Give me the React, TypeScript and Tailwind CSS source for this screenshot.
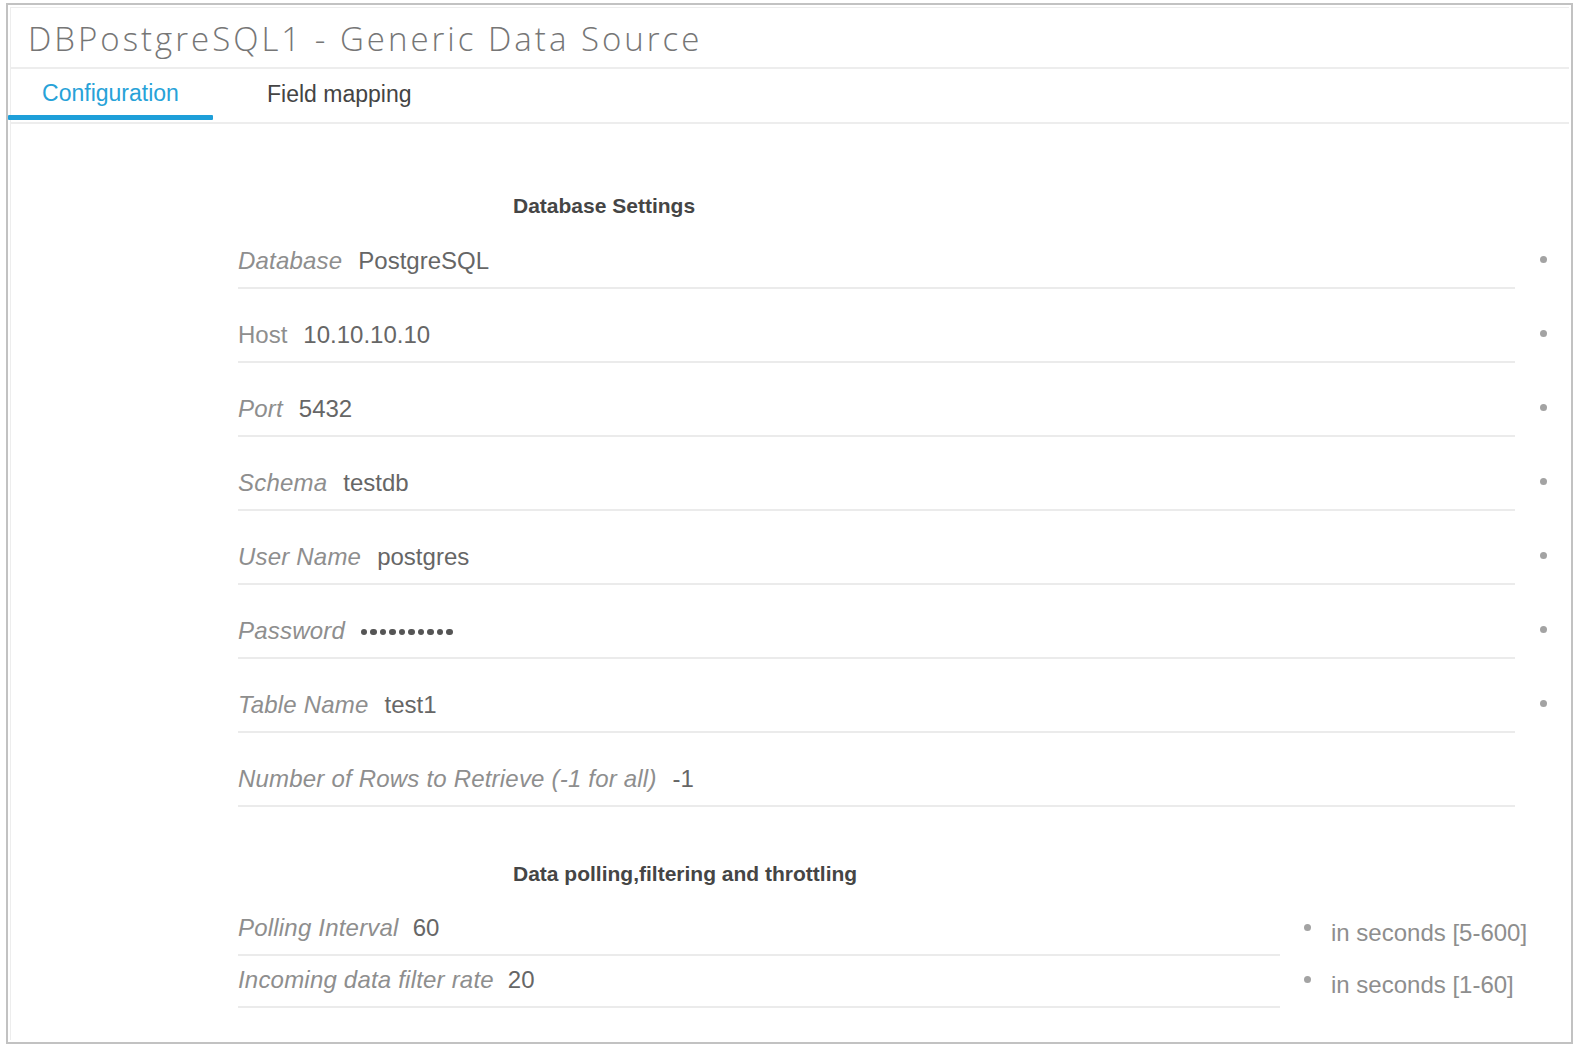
import React from 'react';

type Field = {
    label: string;
    value: string;
    required?: boolean;
    italic?: boolean;
    secret?: boolean;
};

const dbFields: Field[] = [
    { label: 'Database', value: 'PostgreSQL', required: true, italic: true },
    { label: 'Host', value: '10.10.10.10', required: true },
    { label: 'Port', value: '5432', required: true, italic: true },
    { label: 'Schema', value: 'testdb', required: true, italic: true },
    { label: 'User Name', value: 'postgres', required: true, italic: true },
    { label: 'Password', value: '', required: true, italic: true, secret: true },
    { label: 'Table Name', value: 'test1', required: true, italic: true },
    { label: 'Number of Rows to Retrieve (-1 for all)', value: '-1', italic: true },
];

const pollFields = [
    { label: 'Polling Interval', value: '60', hint: 'in seconds [5-600]' },
    { label: 'Incoming data filter rate', value: '20', hint: 'in seconds [1-60]' },
];

const Dot = () => <span className="block w-[7px] h-[7px] rounded-full bg-[#a3a3a3]" />;

function FieldRow({ field }: { field: Field }) {
    return (
        <div className="flex">
            <div className="w-[1277px] shrink-0 flex items-center gap-[16px] pt-[32px] pb-[12px] border-b-2 border-[#ebebeb] leading-[28px] text-[24px]">
                <span className={field.italic ? 'italic text-[#8e8e8e] tracking-[0.2px]' : 'text-[#8e8e8e]'}>
                    {field.label}
                </span>
                {field.secret ? (
                    <span className="flex gap-[3px] items-center pt-[2px]">
                        {Array.from({ length: 10 }).map((_, i) => (
                            <span key={i} className="block w-[6.5px] h-[6.5px] rounded-full bg-[#555]" />
                        ))}
                    </span>
                ) : (
                    <span className="text-[#666]">{field.value}</span>
                )}
            </div>
            <div className="w-[50px] shrink-0 flex items-start pl-[25px] pt-[41px]">
                {field.required && <Dot />}
            </div>
        </div>
    );
}

export default function App() {
    return (
        <div
            className="w-[1591px] h-[1060px] bg-white pt-[3px] pl-[6px]"
            style={{ fontFamily: '"Liberation Sans", Arial, sans-serif' }}
        >
            <div className="w-[1567px] h-[1041px] border-2 border-[#c2c2c2]">
                <div className="m-[2px] h-[1033px] border-l border-t border-[#ededed]">
                    <div className="h-[61px] flex items-center pl-[17px] pt-[2px] border-b-2 border-[#ededed]">
                        <h1
                            className="text-[#767676] text-[33px] font-light tracking-[3px]"
                            style={{ fontFamily: '"Open Sans", sans-serif' }}
                        >
                            DBPostgreSQL1 - Generic Data Source
                        </h1>
                    </div>

                    <div className="h-[55px] flex items-stretch border-b-2 border-[#ededed] text-[23px]">
                        <div className="w-[205px] -ml-[3px] flex flex-col">
                            <div className="flex-1 flex items-center justify-center pt-[3px] text-[#27a2d8]">
                                Configuration
                            </div>
                            <div className="h-[5px] bg-[#1e9fd9] mb-[2px] rounded-[1px]" />
                        </div>
                        <div className="ml-[54px] flex items-center pb-[3px] text-[#444]">Field mapping</div>
                    </div>

                    <div className="ml-[227px]">
                        <h2 className="mt-[70px] ml-[275px] h-[24px] leading-[24px] text-[21px] font-bold text-[#454545]">
                            Database Settings
                        </h2>
                        <div className="-mt-[3px]">
                            {dbFields.map((f) => (
                                <FieldRow key={f.label} field={f} />
                            ))}
                        </div>

                        <h2 className="mt-[55px] ml-[275px] h-[24px] leading-[24px] text-[21px] font-bold text-[#454545]">
                            Data polling,filtering and throttling
                        </h2>
                        <div className="mt-[18px]">
                            {pollFields.map((p) => (
                                <div key={p.label} className="flex">
                                    <div className="w-[1042px] shrink-0 flex items-center gap-[14px] pt-[10px] pb-[12px] border-b-2 border-[#ebebeb] leading-[28px] text-[24px]">
                                        <span className="italic text-[#8e8e8e] tracking-[0.2px]">{p.label}</span>
                                        <span className="text-[#666]">{p.value}</span>
                                    </div>
                                    <div className="flex items-start pt-[13px] pl-[24px] gap-[20px]">
                                        <span className="mt-[7px]"><Dot /></span>
                                        <span className="text-[24px] leading-[28px] text-[#8e8e8e] pt-[2px]">{p.hint}</span>
                                    </div>
                                </div>
                            ))}
                        </div>
                    </div>
                </div>
            </div>
        </div>
    );
}
